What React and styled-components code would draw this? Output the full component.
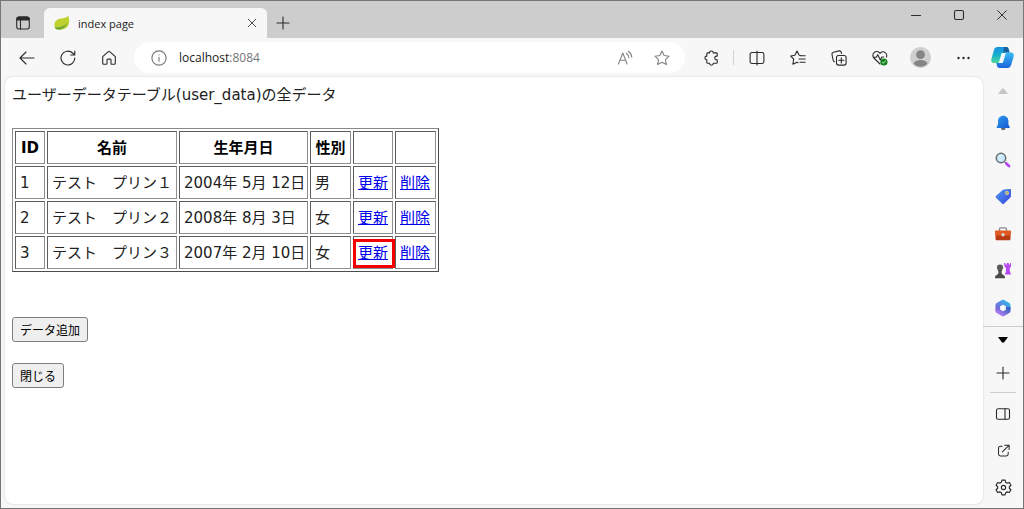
import React from "react";
import styled, { createGlobalStyle } from "styled-components";

const GlobalStyle = createGlobalStyle`
  * {
    box-sizing: border-box;
  }
  body {
    margin: 0;
    background: #f7f7f7;
  }
`;

const BrowserWindow = styled.div`
  display: flex;
  flex-direction: column;
  min-height: 100vh;
  border: 1px solid #757575;
  background: #f7f7f7;
  color: #1b1b1b;
  font-family: "Open Sans", "Noto Sans CJK JP", sans-serif;
`;

const TitleBar = styled.header`
  display: flex;
  align-items: flex-end;
  height: 37px;
  background: #cdcdcd;
`;

const IconButton = styled.button`
  display: flex;
  align-items: center;
  justify-content: center;
  flex: none;
  width: ${props => props.$width || "41px"};
  height: ${props => props.$height || "37px"};
  padding: 0;
  border: none;
  background: transparent;
  color: ${props => props.$color || "#2b2b2b"};
`;

const Tab = styled.div`
  display: flex;
  align-items: center;
  width: 223px;
  height: 30px;
  padding-left: 10px;
  border-radius: 6px 6px 0 0;
  background: #f7f7f7;
`;

const TabTitle = styled.span`
  flex: 1;
  padding-left: 8px;
  font-size: 11px;
`;

const WindowControls = styled.div`
  display: flex;
  align-self: flex-start;
  margin-left: auto;
`;

const Toolbar = styled.nav`
  display: flex;
  align-items: center;
  height: 39px;
  padding-left: 5px;
`;

const AddressBar = styled.form`
  display: flex;
  align-items: center;
  flex: 1;
  min-width: 0;
  height: 31px;
  margin: 0 6px 0 5px;
  padding: 0 5px 0 4px;
  border-radius: 16px;
  background: #ffffff;
`;

const Address = styled.label`
  position: relative;
  display: flex;
  align-items: center;
  flex: 1;
  min-width: 0;
  height: 100%;
`;

const AddressInput = styled.input`
  width: 100%;
  padding: 0;
  border: none;
  outline: none;
  background: transparent;
  color: transparent;
  font-family: inherit;
  font-size: 12px;
`;

const AddressText = styled.span`
  position: absolute;
  left: 0;
  font-size: 12px;
  pointer-events: none;
  > span {
    color: #767676;
  }
`;

const Separator = styled.span`
  width: 1px;
  height: 15px;
  margin: 0 2px 0 1px;
  background: #d2d2d2;
`;

const Content = styled.div`
  display: flex;
  flex: 1;
`;

const Page = styled.main`
  flex: 1;
  min-width: 0;
  margin: 0 0 4px 4px;
  padding: 7px;
  border-radius: 8px;
  background: #ffffff;
  box-shadow: 0 0 2px rgba(0, 0, 0, 0.2);
  color: #222222;
  font-family: "DejaVu Sans", "Noto Sans CJK JP", sans-serif;
  font-size: 15px;
  line-height: 23px;
`;

const PageTitle = styled.p`
  margin: 0 0 21px;
`;

const UserTable = styled.table`
  table-layout: fixed;
  width: 427px;
  margin-bottom: 45px;
  border: 1px solid;
  border-color: #8a8a8a #4c4c4c #4c4c4c #8a8a8a;
  border-collapse: separate;
  border-spacing: 2px;
  white-space: nowrap;
  th,
  td {
    height: 33px;
    padding: 2px 4px 0;
    border: 1px solid;
    border-color: #5c5c5c #8e8e8e #8e8e8e #5c5c5c;
  }
  th {
    color: #000000;
  }
`;

const Column = styled.col`
  width: ${props => props.$width};
`;

const LinkCell = styled.td`
  position: relative;
  &::after {
    content: "";
    display: ${props => (props.$marked ? "block" : "none")};
    position: absolute;
    inset: 2px -3px 0 -1px;
    border: 3px solid #f40000;
    pointer-events: none;
  }
`;

const TableLink = styled.a`
  color: #0000ee;
  text-decoration: underline;
`;

const PageButton = styled.button`
  display: block;
  height: 25px;
  margin: 0 0 21px;
  padding: 0 7px;
  border: 1px solid #7d7d7d;
  border-radius: 3px;
  background: #efefef;
  color: #000000;
  font-family: inherit;
  font-size: 12px;
`;

const Sidebar = styled.aside`
  display: flex;
  flex-direction: column;
  align-items: center;
  width: 40px;
`;

const SidebarLine = styled.span`
  width: ${props => props.$width};
  height: 1px;
  margin-bottom: ${props => props.$gap || "0"};
  background: #cccccc;
`;

const Line = ({ size = 16, children }) => (
  <svg
    width={size}
    height={size}
    viewBox="0 0 16 16"
    fill="none"
    stroke="currentColor"
    strokeWidth="1.1"
    strokeLinecap="round"
    strokeLinejoin="round"
    aria-hidden="true"
  >
    {children}
  </svg>
);

const WorkspaceIcon = () => (
  <Line>
    <rect x="1.7" y="2" width="12.6" height="12" rx="2.2" />
    <path d="M2 5V4a2 2 0 0 1 2-2h8a2 2 0 0 1 2 2v1z" fill="currentColor" />
    <path d="M5.5 5v9" />
  </Line>
);

const LeafIcon = () => (
  <svg width="16" height="16" viewBox="0 0 16 16" aria-hidden="true">
    <path d="M14.3.8c1.200 3.400 1.500 7.400-.4 10.200-2.100 3.200-6.600 4.300-10.400 3.500C1 14 0 11.200.6 8.400 1.500 4.600 5 3.800 8.400 3.300c2.500-.4 4.600-1 5.900-2.500z" fill="#bfd12f" />
    <path d="M.8 12.300c4.800.6 9.400-.9 12.900-4.900-2.200 4.800-6 7.600-10.200 7.100-1.200-.2-2.200-1-2.700-2.200z" fill="#6ba539" />
  </svg>
);

const CloseIcon = ({ size }) => (
  <Line size={size}>
    <path d="M3 3l10 10M13 3L3 13" />
  </Line>
);

const PlusIcon = () => (
  <Line>
    <path d="M8 2v12M2 8h12" />
  </Line>
);

const MinimizeIcon = () => (
  <Line>
    <path d="M3.500 8.500h9" />
  </Line>
);

const MaximizeIcon = () => (
  <Line>
    <rect x="3.500" y="3.500" width="9" height="9" rx="1.600" />
  </Line>
);

const BackIcon = () => (
  <Line>
    <path d="M15 8H1M7 2L1 8l6 6" />
  </Line>
);

const RefreshIcon = () => (
  <Line>
    <path d="M14.800 8a6.900 6.900 0 1 1-2.200-5l2 1.900M14.800 1v4h-4" />
  </Line>
);

const HomeIcon = () => (
  <Line>
    <path d="M1.700 6.700L7.300 1.600a1 1 0 0 1 1.400 0l5.600 5.100v6.600a1 1 0 0 1-1 1h-2.500a.8.8 0 0 1-.8-.8V10a.9.900 0 0 0-.9-.9H6.900A.9.900 0 0 0 6 10v3.500a.8.800 0 0 1-.8.8H2.700a1 1 0 0 1-1-1z" />
  </Line>
);

const InfoIcon = () => (
  <Line>
    <circle cx="8" cy="8" r="7.100" />
    <path d="M8 7.300v4M8 4.800v.1" />
  </Line>
);

const ReadAloudIcon = () => (
  <Line>
    <path d="M1.500 14L5.800 3l4.300 11M3 10.300h5.600M9.300 3.200a6 6 0 0 1 2.600 4.500M11.300 1.200a8 8 0 0 1 3.500 6" />
  </Line>
);

const StarIcon = () => (
  <Line>
    <path d="M8 1l2.100 4.500 5 .7-3.600 3.400.9 5L8 12.300l-4.400 2.300.9-5L.9 6.200l5-.7z" />
  </Line>
);

const ExtensionsIcon = () => (
  <Line>
    <path d="M5.500 2.900a1.900 1.900 0 0 1 3.800 0h3a.9.900 0 0 1 .9.900v2.300h-.6a1.900 1.900 0 0 0 0 3.800h.6v2.500a.9.900 0 0 1-.9.900h-3a1.900 1.900 0 0 1-3.800 0H3.700a.9.900 0 0 1-.9-.9V9.900a1.900 1.900 0 0 1 0-3.800V3.800a.9.900 0 0 1 .9-.9z" />
  </Line>
);

const SplitIcon = () => (
  <Line>
    <path d="M6 2.500H3A1.900 1.900 0 0 0 1.100 4.400v7.200A1.900 1.900 0 0 0 3 13.500h3M10 2.500h3a1.900 1.900 0 0 1 1.900 1.900v7.200a1.900 1.900 0 0 1-1.900 1.900h-3M6 2.500h4M6 13.500h4M8 1v14" />
  </Line>
);

const FavoritesIcon = () => (
  <Line>
    <path d="M11.500 5.500L9.200 5.200 7 1 4.900 5.200.7 6l3 3.200-.8 5L7 12.300l1 .5M10.200 5.800h5M9 9h6.200M10 12.200h5.200" />
  </Line>
);

const CollectionsIcon = () => (
  <Line>
    <rect x="5.500" y="5.500" width="9.600" height="9.600" rx="2" />
    <path d="M10.300 7.700v5.200M7.700 10.300h5.200M3.500 11.800a2 2 0 0 1-1.400-1.800L1 4.500A2 2 0 0 1 2.500 2.200L8 .9a2 2 0 0 1 2.300 1.500l.2 1" />
  </Line>
);

const HealthIcon = () => (
  <Line>
    <path d="M8 14L1.900 8A3.800 3.800 0 0 1 7.400 2.700L8 3.300l.6-.6A3.800 3.800 0 0 1 14.500 7M1.300 7.300h3l1.500-2.600L8.300 10l1.500-3h2" />
    <circle cx="11.900" cy="12" r="3.600" fill="#16821c" stroke="none" />
    <path d="M10.300 12.300l1.100 1 2.100-2.500" stroke="#dff5df" strokeWidth=".8" />
  </Line>
);

const AvatarIcon = () => (
  <svg width="21" height="21" viewBox="0 0 21 21" aria-hidden="true">
    <circle cx="10.500" cy="10.500" r="10.500" fill="#cfcfcf" />
    <circle cx="10.500" cy="7.700" r="4.400" fill="#858585" />
    <path d="M3.500 16.500c1.500-2.700 4-3.400 7-3.400s5.500.7 7 3.400a9.200 9.200 0 0 1-14 0z" fill="#858585" />
  </svg>
);

const MoreIcon = () => (
  <svg width="16" height="16" viewBox="0 0 16 16" fill="currentColor" aria-hidden="true">
    <circle cx="4.500" cy="8" r="1.200" />
    <circle cx="9.500" cy="8" r="1.200" />
    <circle cx="14.500" cy="8" r="1.200" />
  </svg>
);

const CopilotIcon = () => (
  <svg width="23" height="23" viewBox="0 0 23 23" aria-hidden="true">
    <defs>
      <linearGradient id="copilot-left" x1="0" y1="0" x2="0" y2="1">
        <stop offset="0" stopColor="#1a8fe0" />
        <stop offset=".5" stopColor="#17b0cc" />
        <stop offset="1" stopColor="#4fd896" />
      </linearGradient>
      <linearGradient id="copilot-right" x1="0" y1="0" x2="0" y2="1">
        <stop offset="0" stopColor="#38bdf4" />
        <stop offset="1" stopColor="#1c63dd" />
      </linearGradient>
    </defs>
    <path d="M6.500 1h8.700c1.300 0 2 .8 2.400 2.200l1 3.300h-3.300c-2.100 0-3 1.300-3.500 3.200L9.700 17H2.600C.4 17-.1 14.800.5 12.600L2.900 4C3.500 2 4.600 1 6.500 1z" fill="url(#copilot-left)" />
    <path d="M13 1h2.200c1.300 0 2 .8 2.400 2.200l1 3.300h-3.300c-1.500 0-2.500.7-3 2z" fill="#185c9c" />
    <path d="M16.500 22H8.600c-1.500 0-2.200-.8-2.600-2.200L5.200 17h2.200c2.100 0 3-1.300 3.500-3.200l2.200-7.300h7.300c2.200 0 2.700 2.200 2.100 4.400L20.100 19c-.6 2-1.700 3-3.600 3z" fill="url(#copilot-right)" />
    <path d="M10.600 7h4.200l-2.500 8.500c-.3 1-.8 1.500-1.600 1.500H7.800z" fill="#f4fbff" />
  </svg>
);

const TriangleIcon = ({ down }) => (
  <svg width="10" height="6" viewBox="0 0 10 6" fill="currentColor" aria-hidden="true">
    <path d={down ? "M0 0h10L6 5.500H4z" : "M0 6h10L5.800.4H4.200z"} />
  </svg>
);

const BellIcon = () => (
  <svg width="16" height="16" viewBox="0 0 16 16" aria-hidden="true">
    <defs>
      <linearGradient id="bell" x1="0" y1="0" x2="1" y2="1">
        <stop offset="0" stopColor="#2f9bf0" />
        <stop offset="1" stopColor="#1457d0" />
      </linearGradient>
    </defs>
    <path d="M6 13h4.500a2.200 2.200 0 0 1-4.500 0z" fill="#6a6a6a" />
    <path d="M8.200.7c3.100 0 5.200 2.300 5.200 5.300v3.500l1.300 2.600c.2.500 0 1-.6 1H2.300c-.6 0-.8-.5-.6-1L3 9.500V6C3 3 5.100.7 8.200.7z" fill="url(#bell)" />
  </svg>
);

const SearchIcon = () => (
  <svg width="16" height="16" viewBox="0 0 16 16" aria-hidden="true">
    <path d="M9.800 10l1.200 1" stroke="#666666" strokeWidth="1.500" />
    <path d="M11.300 11.500l2.700 2.500" stroke="#b346f0" strokeWidth="2.800" strokeLinecap="round" />
    <circle cx="6" cy="6" r="4.700" fill="#c9eaff" stroke="#696969" strokeWidth="1.500" />
    <path d="M4 5.500a2.500 2.500 0 0 1 2-1.700" fill="none" stroke="#ffffff" />
  </svg>
);

const TagIcon = () => (
  <svg width="17" height="17" viewBox="0 0 17 17" aria-hidden="true">
    <defs>
      <linearGradient id="tag" x1="0" y1="0" x2="1" y2="1">
        <stop offset="0" stopColor="#4a9df0" />
        <stop offset="1" stopColor="#3c43dc" />
      </linearGradient>
    </defs>
    <path d="M9 1.500l6-.5c.7 0 1 .3 1 1v6c0 .6-.2 1-.6 1.400l-6.200 6.200c-.7.700-1.500.7-2.200 0L1.200 10c-.7-.7-.7-1.500 0-2.200L7.600 2.100c.4-.4.800-.6 1.400-.6z" fill="url(#tag)" />
    <circle cx="12" cy="5" r="1.900" fill="#f4d66c" />
    <circle cx="12" cy="5" r=".8" fill="#4c78b8" />
  </svg>
);

const ToolsIcon = () => (
  <svg width="18" height="16" viewBox="0 0 18 16" aria-hidden="true">
    <path d="M5.500 5V3c0-.7.5-1.200 1.200-1.200h4.600c.7 0 1.200.5 1.200 1.200v2" fill="none" stroke="#8a8a8a" strokeWidth="1.300" />
    <path d="M1.500 8h15v5c0 .8-.5 1.300-1.300 1.300H2.800c-.8 0-1.300-.5-1.300-1.300z" fill="#b83c12" />
    <path d="M2 4.500h14c.6 0 1 .4 1 1V8c0 1-.7 1.500-1.500 1.500h-13C1.700 9.500 1 9 1 8V5.500c0-.6.4-1 1-1z" fill="#e25a24" />
    <circle cx="9" cy="8.700" r="1.700" fill="#d9d9d9" />
  </svg>
);

const GamesIcon = () => (
  <svg width="18" height="18" viewBox="0 0 18 18" aria-hidden="true">
    <path d="M10 1h1.500v1.400h1.400V1h1.900v1.400h1.300V1H17v3.500L15.800 6v3l1.200 3.500h-6L12 9V6l-1.600-1.500z" fill="#b648ef" />
    <circle cx="6" cy="5.500" r="3.100" fill="#5a5a5a" />
    <path d="M4 8h4v1.300h-.7c.1 2 .8 3 2.200 4H10c.8.500 1 1.500 1 3H1c0-1.500.2-2.500 1-3h.5c1.400-1 2.100-2 2.200-4H4z" fill="#4a4a4a" />
  </svg>
);

const OfficeIcon = () => (
  <svg width="18" height="18" viewBox="0 0 18 18" aria-hidden="true">
    <defs>
      <linearGradient id="office-top" x1="0" y1="1" x2="1" y2="0">
        <stop offset="0" stopColor="#7d5fdc" />
        <stop offset="1" stopColor="#38b4ea" />
      </linearGradient>
      <linearGradient id="office-bottom" x1="0" y1="1" x2="1" y2="0">
        <stop offset="0" stopColor="#b77cf0" />
        <stop offset="1" stopColor="#2b62c4" />
      </linearGradient>
    </defs>
    <g fill="none" strokeWidth="4.600" strokeLinejoin="round">
      <path d="M3.800 12V6l5.200-3 5.200 3v3.500" stroke="url(#office-top)" />
      <path d="M14.200 8v4L9 15l-5.200-3v-1.500" stroke="url(#office-bottom)" />
    </g>
  </svg>
);

const PanelIcon = () => (
  <Line>
    <rect x="1.500" y="2.800" width="13" height="10.500" rx="1.600" />
    <path d="M10 2.800v10.500" />
  </Line>
);

const OpenIcon = () => (
  <Line size={15}>
    <path d="M6.500 3.500H4.700a2 2 0 0 0-2 2v6.300a2 2 0 0 0 2 2H11a2 2 0 0 0 2-2V10M6.800 9.500L13.800 2.500M9.300 2.300h4.700V7" />
  </Line>
);

const SettingsIcon = () => (
  <Line size={17}>
    <path d="M6.500 1h3l.5 2 1.500.9 2-.6 1.500 2.600L13.500 7.300v1.400l1.500 1.400-1.500 2.600-2-.6L10 13l-.5 2h-3L6 13l-1.500-.9-2 .6L1 10.100l1.500-1.400V7.300L1 5.900l1.500-2.600 2 .6L6 3z" />
    <circle cx="8" cy="8" r="2" />
  </Line>
);

const users = [
  { id: 1, name: "テスト　プリン１", birthday: "2004年 5月 12日", sex: "男" },
  { id: 2, name: "テスト　プリン２", birthday: "2008年 8月 3日", sex: "女" },
  { id: 3, name: "テスト　プリン３", birthday: "2007年 2月 10日", sex: "女", marked: true }
];

const toolbarItems = [
  { label: "Split screen", icon: <SplitIcon /> },
  { label: "Favorites", icon: <FavoritesIcon /> },
  { label: "Collections", icon: <CollectionsIcon /> },
  { label: "Browser essentials", icon: <HealthIcon /> },
  { label: "Profile", icon: <AvatarIcon /> },
  { label: "Settings and more", icon: <MoreIcon /> },
  { label: "Copilot", icon: <CopilotIcon /> }
];

const sidebarApps = [
  { label: "Notifications", icon: <BellIcon /> },
  { label: "Search", icon: <SearchIcon /> },
  { label: "Shopping", icon: <TagIcon /> },
  { label: "Tools", icon: <ToolsIcon /> },
  { label: "Games", icon: <GamesIcon /> },
  { label: "Microsoft 365", icon: <OfficeIcon /> }
];

const UserRow = ({ user }) => (
  <tr>
    <td>{user.id}</td>
    <td>{user.name}</td>
    <td>{user.birthday}</td>
    <td>{user.sex}</td>
    <LinkCell $marked={user.marked}>
      <TableLink href="#update">更新</TableLink>
    </LinkCell>
    <LinkCell>
      <TableLink href="#delete">削除</TableLink>
    </LinkCell>
  </tr>
);

const App = () => (
  <BrowserWindow>
    <GlobalStyle />
    <TitleBar>
      <IconButton $width="43px" $height="30px" aria-label="Workspaces">
        <WorkspaceIcon />
      </IconButton>
      <Tab>
        <LeafIcon />
        <TabTitle>index page</TabTitle>
        <IconButton $width="30px" $height="30px" aria-label="Close tab">
          <CloseIcon size={12} />
        </IconButton>
      </Tab>
      <IconButton $width="32px" $height="30px" aria-label="New tab">
        <PlusIcon />
      </IconButton>
      <WindowControls>
        <IconButton $width="43px" $height="28px" aria-label="Minimize">
          <MinimizeIcon />
        </IconButton>
        <IconButton $width="43px" $height="28px" aria-label="Maximize">
          <MaximizeIcon />
        </IconButton>
        <IconButton $width="43px" $height="28px" aria-label="Close">
          <CloseIcon size={14} />
        </IconButton>
      </WindowControls>
    </TitleBar>
    <Toolbar>
      <IconButton aria-label="Back">
        <BackIcon />
      </IconButton>
      <IconButton aria-label="Refresh">
        <RefreshIcon />
      </IconButton>
      <IconButton aria-label="Home">
        <HomeIcon />
      </IconButton>
      <AddressBar>
        <IconButton type="button" $height="31px" $color="#757575" aria-label="Site information">
          <InfoIcon />
        </IconButton>
        <Address>
          <AddressInput type="text" aria-label="Address" />
          <AddressText>
            localhost<span>:8084</span>
          </AddressText>
        </Address>
        <IconButton type="button" $width="37px" $height="31px" $color="#858585" aria-label="Read aloud">
          <ReadAloudIcon />
        </IconButton>
        <IconButton type="button" $width="37px" $height="31px" $color="#858585" aria-label="Add to favorites">
          <StarIcon />
        </IconButton>
      </AddressBar>
      <IconButton aria-label="Extensions">
        <ExtensionsIcon />
      </IconButton>
      <Separator />
      {toolbarItems.map(item => (
        <IconButton key={item.label} aria-label={item.label}>
          {item.icon}
        </IconButton>
      ))}
    </Toolbar>
    <Content>
      <Page>
        <PageTitle>ユーザーデータテーブル(user_data)の全データ</PageTitle>
        <UserTable>
          <colgroup>
            <Column $width="30px" />
            <Column $width="130px" />
            <Column $width="129px" />
            <Column $width="41px" />
            <Column $width="40px" />
            <Column $width="41px" />
          </colgroup>
          <thead>
            <tr>
              <th>ID</th>
              <th>名前</th>
              <th>生年月日</th>
              <th>性別</th>
              <th></th>
              <th></th>
            </tr>
          </thead>
          <tbody>
            {users.map(user => (
              <UserRow key={user.id} user={user} />
            ))}
          </tbody>
        </UserTable>
        <PageButton>データ追加</PageButton>
        <PageButton>閉じる</PageButton>
      </Page>
      <Sidebar>
        <IconButton $height="27px" $color="#c6c6c6" aria-label="Scroll up">
          <TriangleIcon />
        </IconButton>
        {sidebarApps.map(app => (
          <IconButton key={app.label} aria-label={app.label}>
            {app.icon}
          </IconButton>
        ))}
        <SidebarLine $width="100%" />
        <IconButton $height="26px" $color="#000000" aria-label="Scroll down">
          <TriangleIcon down />
        </IconButton>
        <IconButton $height="39px" aria-label="Customize">
          <PlusIcon />
        </IconButton>
        <SidebarLine $width="26px" $gap="2px" />
        <IconButton aria-label="Hide sidebar">
          <PanelIcon />
        </IconButton>
        <IconButton aria-label="Open link">
          <OpenIcon />
        </IconButton>
        <IconButton aria-label="Settings">
          <SettingsIcon />
        </IconButton>
      </Sidebar>
    </Content>
  </BrowserWindow>
);

export default App;
